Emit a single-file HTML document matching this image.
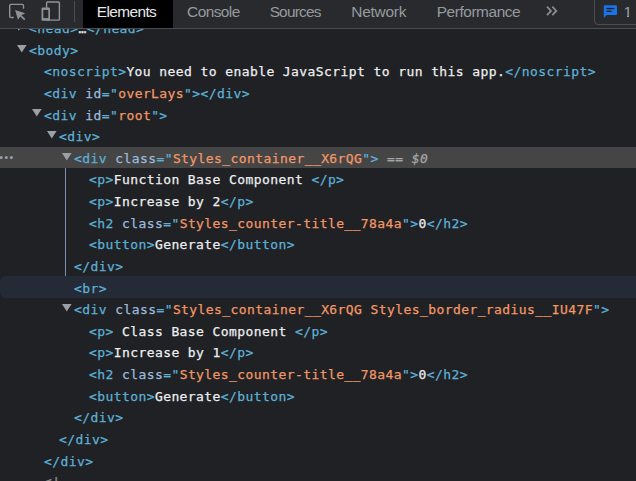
<!DOCTYPE html>
<html><head><meta charset="utf-8"><title>DevTools</title>
<style>
html,body{margin:0;padding:0;background:#202124;}
body{width:636px;height:481px;overflow:hidden;position:relative;font-family:"Liberation Sans",sans-serif;}
#bar{position:absolute;left:0;top:0;width:636px;height:28px;background:#292a2d;border-bottom:1px solid #494c50;box-sizing:content-box;z-index:5;}
#bar .tab{position:absolute;top:0;height:28px;line-height:24px;font-size:15.4px;letter-spacing:-0.3px;color:#959a9f;white-space:nowrap;}
#bar .tab.act{background:#000;color:#e8eaed;}
#tree{position:absolute;left:0;top:29px;width:636px;height:452px;overflow:hidden;}
.row{position:absolute;left:0;width:636px;height:21.62px;margin-top:-29px;}
.row.sel{background:#454546;}
.row.hov{background:#242a36;border-radius:6px 0 0 6px;left:0px;}
.tx{position:absolute;top:1.15px;white-space:pre;font-family:"DejaVu Sans Mono", "Liberation Mono", monospace;font-size:13px;letter-spacing:0.41px;line-height:21px;color:#eceef0;-webkit-text-stroke:0.25px currentColor;}
.t{color:#5db0d7}.a{color:#9bbbdc}.v{color:#f29766}.x{color:#eceef0}.c{color:#898989}
.i{color:#a5a5a5;font-style:italic}
.el{color:#e8eaed}
.tri{position:absolute;top:6px;}
.dots{position:absolute;left:0;top:0;fill:#9aa0a6}
.guide{position:absolute;width:1.25px;background:#7c8fb7;}
</style></head><body>
<div id="tree">
<div class="row" style="top:16.98px"><svg class="tri" style="left:18.0px;top:4.5px" width="8" height="10" viewBox="0 0 8 10"><path d="M0 0 V9.6 L7.4 4.8 Z" fill="#9aa0a6"/></svg><span class="tx" style="left:29.00px"><span class="t">&lt;head&gt;</span><span class="el">…</span><span class="t">&lt;/head&gt;</span></span></div>
<div class="row" style="top:38.60px"><svg class="tri" style="left:17.0px" width="10" height="8" viewBox="0 0 10 8"><path d="M0 0 H9.6 L4.8 7.4 Z" fill="#9aa0a6"/></svg><span class="tx" style="left:29.00px"><span class="t">&lt;body&gt;</span></span></div>
<div class="row" style="top:60.22px"><span class="tx" style="left:44.00px"><span class="t">&lt;noscript&gt;</span><span class="x">You need to enable JavaScript to run this app.</span><span class="t">&lt;/noscript&gt;</span></span></div>
<div class="row" style="top:81.84px"><span class="tx" style="left:44.00px"><span class="t">&lt;div</span> <span class="a">id</span><span class="t">="</span><span class="v">overLays</span><span class="t">"&gt;&lt;/div&gt;</span></span></div>
<div class="row" style="top:103.46px"><svg class="tri" style="left:32.0px" width="10" height="8" viewBox="0 0 10 8"><path d="M0 0 H9.6 L4.8 7.4 Z" fill="#9aa0a6"/></svg><span class="tx" style="left:44.00px"><span class="t">&lt;div</span> <span class="a">id</span><span class="t">="</span><span class="v">root</span><span class="t">"&gt;</span></span></div>
<div class="row" style="top:125.08px"><svg class="tri" style="left:47.0px" width="10" height="8" viewBox="0 0 10 8"><path d="M0 0 H9.6 L4.8 7.4 Z" fill="#9aa0a6"/></svg><span class="tx" style="left:59.00px"><span class="t">&lt;div&gt;</span></span></div>
<div class="row sel" style="top:146.70px"><svg class="dots" width="14" height="21" viewBox="0 0 14 21"><circle cx="1.2" cy="10.6" r="1.5"/><circle cx="6.3" cy="10.6" r="1.5"/><circle cx="11.4" cy="10.6" r="1.5"/></svg><svg class="tri" style="left:62.0px" width="10" height="8" viewBox="0 0 10 8"><path d="M0 0 H9.6 L4.8 7.4 Z" fill="#9aa0a6"/></svg><span class="tx" style="left:74.00px"><span class="t">&lt;div</span> <span class="a">class</span><span class="t">="</span><span class="v">Styles_container__X6rQG</span><span class="t">"&gt;</span><span class="i"> == $0</span></span></div>
<div class="row" style="top:168.32px"><span class="tx" style="left:89.00px"><span class="t">&lt;p&gt;</span><span class="x">Function Base Component </span><span class="t">&lt;/p&gt;</span></span></div>
<div class="row" style="top:189.94px"><span class="tx" style="left:89.00px"><span class="t">&lt;p&gt;</span><span class="x">Increase by 2</span><span class="t">&lt;/p&gt;</span></span></div>
<div class="row" style="top:211.56px"><span class="tx" style="left:89.00px"><span class="t">&lt;h2</span> <span class="a">class</span><span class="t">="</span><span class="v">Styles_counter-title__78a4a</span><span class="t">"&gt;</span><span class="x">0</span><span class="t">&lt;/h2&gt;</span></span></div>
<div class="row" style="top:233.18px"><span class="tx" style="left:89.00px"><span class="t">&lt;button&gt;</span><span class="x">Generate</span><span class="t">&lt;/button&gt;</span></span></div>
<div class="row" style="top:254.80px"><span class="tx" style="left:74.00px"><span class="t">&lt;/div&gt;</span></span></div>
<div class="row hov" style="top:276.42px"><span class="tx" style="left:74.00px"><span class="t">&lt;br&gt;</span></span></div>
<div class="row" style="top:298.04px"><svg class="tri" style="left:62.0px" width="10" height="8" viewBox="0 0 10 8"><path d="M0 0 H9.6 L4.8 7.4 Z" fill="#9aa0a6"/></svg><span class="tx" style="left:74.00px"><span class="t">&lt;div</span> <span class="a">class</span><span class="t">="</span><span class="v">Styles_container__X6rQG Styles_border_radius__IU47F</span><span class="t">"&gt;</span></span></div>
<div class="row" style="top:319.66px"><span class="tx" style="left:89.00px"><span class="t">&lt;p&gt;</span><span class="x"> Class Base Component </span><span class="t">&lt;/p&gt;</span></span></div>
<div class="row" style="top:341.28px"><span class="tx" style="left:89.00px"><span class="t">&lt;p&gt;</span><span class="x">Increase by 1</span><span class="t">&lt;/p&gt;</span></span></div>
<div class="row" style="top:362.90px"><span class="tx" style="left:89.00px"><span class="t">&lt;h2</span> <span class="a">class</span><span class="t">="</span><span class="v">Styles_counter-title__78a4a</span><span class="t">"&gt;</span><span class="x">0</span><span class="t">&lt;/h2&gt;</span></span></div>
<div class="row" style="top:384.52px"><span class="tx" style="left:89.00px"><span class="t">&lt;button&gt;</span><span class="x">Generate</span><span class="t">&lt;/button&gt;</span></span></div>
<div class="row" style="top:406.14px"><span class="tx" style="left:74.00px"><span class="t">&lt;/div&gt;</span></span></div>
<div class="row" style="top:427.76px"><span class="tx" style="left:59.00px"><span class="t">&lt;/div&gt;</span></span></div>
<div class="row" style="top:449.38px"><span class="tx" style="left:44.00px"><span class="t">&lt;/div&gt;</span></span></div>
<div class="row" style="top:469.50px"><span class="tx" style="left:44.00px"><span class="c">&lt;!--</span></span></div>
<div class="guide" style="left:65px;top:139px;height:108px"></div>
</div>
<div id="bar">
<svg style="position:absolute;left:0;top:0" width="80" height="28" viewBox="0 0 80 28" fill="none" stroke="#8f9296" stroke-width="1.4">
<path d="M23.5 8.8 V5.6 a1.2 1.2 0 0 0 -1.2 -1.2 H10.9 a1.2 1.2 0 0 0 -1.2 1.2 V16.3 a1.2 1.2 0 0 0 1.2 1.2 H13.8"/>
<path d="M15.1 10.1 L25.2 13.3 L21.4 15.2 L25.4 19 L24.1 20.2 L20.2 16.4 L18 19.8 Z" fill="#8f9296" stroke="none"/>
<rect x="46.6" y="2" width="12.8" height="18.1" rx="0.8"/>
<rect x="41.5" y="7.5" width="8.5" height="13.3" rx="1.2" fill="#8f9296" stroke="none"/>
<rect x="43.3" y="9.9" width="5" height="8.2" fill="#292a2d" stroke="none"/>
</svg>
<div style="position:absolute;left:74px;top:1px;width:1px;height:21px;background:#4a4c50"></div>
<div class="tab act" style="left:83px;width:90px;"><span style="position:absolute;left:13.75px;letter-spacing:-0.593px">Elements</span></div>
<div class="tab" style="left:187.1px;letter-spacing:-0.542px">Console</div>
<div class="tab" style="left:269.65px;letter-spacing:-0.783px">Sources</div>
<div class="tab" style="left:351.3px;letter-spacing:-0.233px">Network</div>
<div class="tab" style="left:436.75px;letter-spacing:-0.425px">Performance</div>
<svg style="position:absolute;left:540px;top:0" width="24" height="24" viewBox="0 0 24 24" fill="none" stroke="#898c90" stroke-width="1.8"><path d="M7 6.6 L11 10.9 L7 15.2"/><path d="M12.3 6.6 L16.3 10.9 L12.3 15.2"/></svg>
<div style="position:absolute;left:594px;top:-4px;width:60px;height:27px;border:1px solid #4a4c50;border-radius:4px;"></div>
<svg style="position:absolute;left:600px;top:2px" width="20" height="20" viewBox="0 0 20 20"><path d="M4.9 3.3 H15.9 a1.1 1.1 0 0 1 1.1 1.1 V12 a1.1 1.1 0 0 1 -1.1 1.1 H6.5 L3.8 16 V4.4 a1.1 1.1 0 0 1 1.1 -1.1 Z" fill="#1a73e8"/><rect x="6.4" y="5.9" width="8" height="1.3" fill="#202124"/><rect x="6.4" y="8.6" width="5.4" height="1.3" fill="#202124"/></svg>
<div class="tab" style="left:623.5px;color:#9aa0a6">1</div>
<div style="position:absolute;left:622px;top:16px;width:5px;height:1px;background:#292a2d"></div><div style="position:absolute;left:629px;top:16px;width:4px;height:1px;background:#292a2d"></div>
</div>
</body></html>
